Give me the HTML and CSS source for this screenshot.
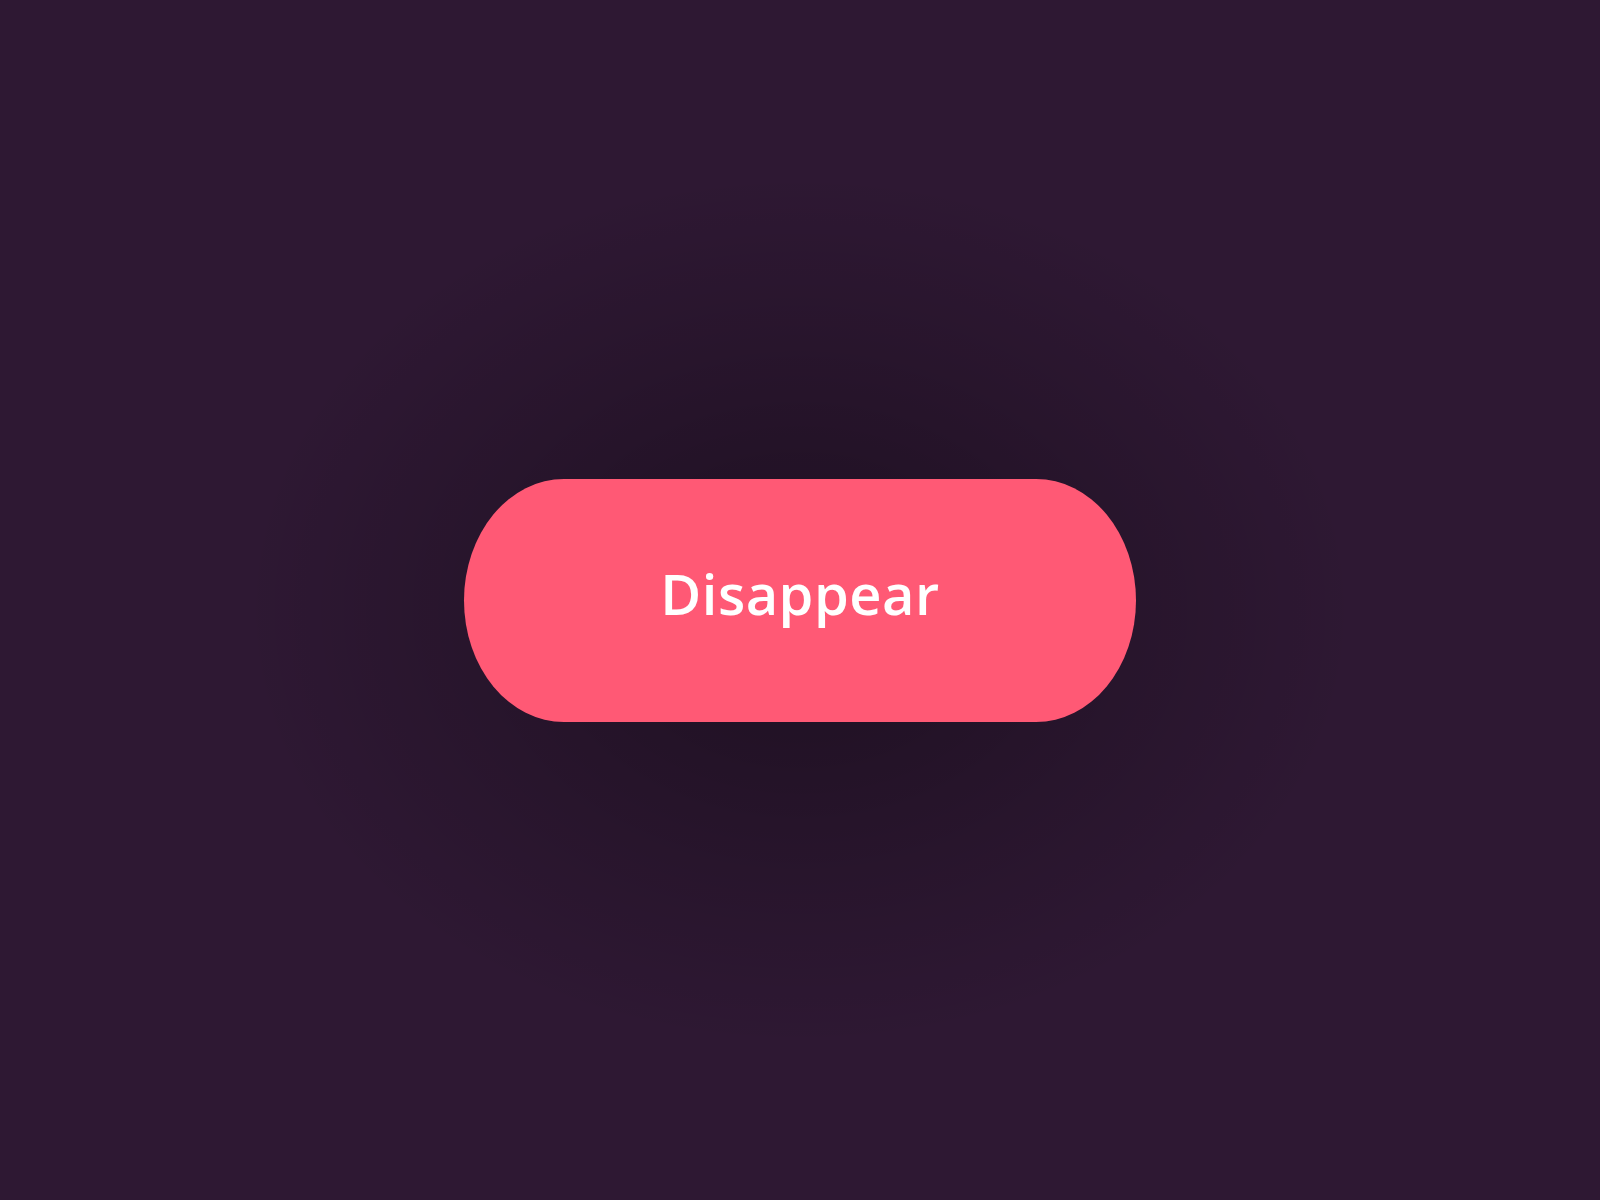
FILE: index.html
```html
<!DOCTYPE html>
<html lang="en">
<head>
    <meta charset="UTF-8">
    <meta name="viewport" content="width=device-width, initial-scale=1.0">
    <title>Disappear</title>
    <link rel="stylesheet" href="styles.css">
</head>
<body>
    <div class="stage">
        <button type="button" class="vanish-button">Disappear</button>
    </div>
</body>
</html>
```

FILE: styles.css
```css
html, body {
    margin: 0;
    height: 100%;
}
body {
    background-color: #2e1833;
    font-family: "Open Sans", "Noto Sans", sans-serif;
}
/* dark halo behind the button, fading out into the page colour */
.stage {
    display: flex;
    align-items: center;
    justify-content: center;
    height: 100%;
    background: radial-gradient(ellipse 560px 440px at 50% calc(50% + 10px),
        rgba(0, 0, 0, 0.27) 0%,
        rgba(0, 0, 0, 0.26) 28%,
        rgba(0, 0, 0, 0.12) 64%,
        rgba(0, 0, 0, 0) 100%);
}
.vanish-button {
    width: 672px;
    height: 243px;
    padding: 0 0 14px;
    border: none;
    border-radius: 100px / 50%;
    background-color: #ff5975;
    color: #fff;
    font-family: inherit;
    font-size: 56px;
    font-weight: 600;
    letter-spacing: 0.5px;
    cursor: pointer;
}
```
